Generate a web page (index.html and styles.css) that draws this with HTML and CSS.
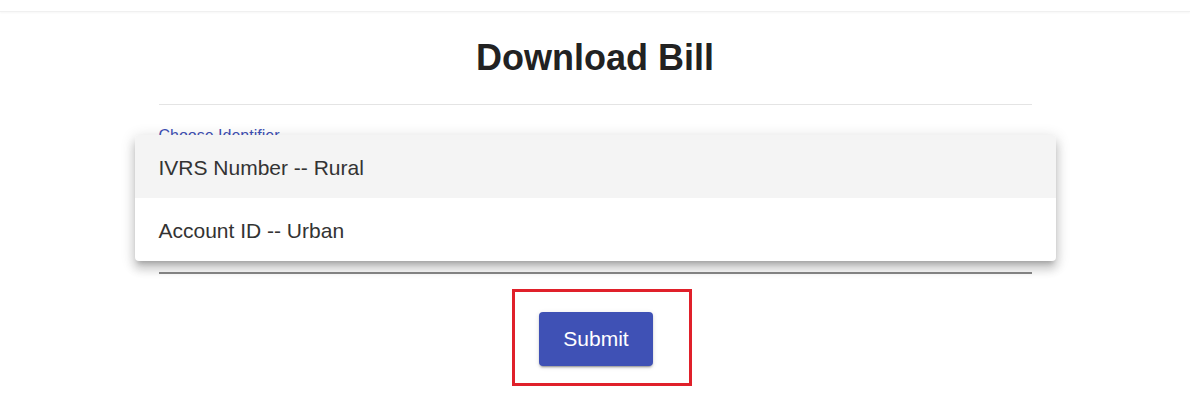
FILE: index.html
```html
<!DOCTYPE html>
<html lang="en">
<head>
  <meta charset="UTF-8">
  <meta name="viewport" content="width=device-width, initial-scale=1.0">
  <title>Download Bill</title>
  <link rel="stylesheet" href="styles.css">
</head>
<body>
  <!-- top app bar edge -->
  <div class="topbar"></div>

  <div class="page">
    <h1 class="title">Download Bill</h1>
    <hr class="divider">

    <!-- identifier select, menu open -->
    <div class="field">
      <label class="field-label">Choose Identifier</label>
      <div class="field-input"></div>
      <ul class="menu">
        <li class="menu-item selected">IVRS Number -- Rural</li>
        <li class="menu-item">Account ID -- Urban</li>
      </ul>
    </div>

    <div class="submit-row">
      <div class="highlight">
        <button class="submit-btn">Submit</button>
      </div>
    </div>
  </div>
</body>
</html>
```

FILE: styles.css
```css
body {
  margin: 0;
  padding: 0;
  background: #fff;
  color: #222;
  font-family: 'Liberation Sans', Arial, sans-serif;
}

.topbar {
  height: 11px;
  border-bottom: 1px solid #f0f0f0;
  box-shadow: 0 1px 2px rgba(0, 0, 0, 0.04);
}

.page {
  width: 873px;
  margin: 0 auto;
}

.title {
  margin: 25px 0 0;
  font-size: 36px;
  line-height: 42px;
  font-weight: bold;
  text-align: center;
  color: #222;
}

.divider {
  margin: 25px 0 0;
  border: none;
  border-top: 1px solid #e4e4e4;
}

.field {
  position: relative;
  margin-top: 22px;
}

.field-label {
  display: block;
  font-size: 16px;
  line-height: 18px;
  color: #3f51b5;
}

.field-input {
  height: 127px;
  border-bottom: 2px solid #8a8a8a;
}

/* open dropdown lies over the field */
.menu {
  position: absolute;
  top: 8px;
  left: -24px;
  right: -24px;
  margin: 0;
  padding: 0;
  list-style: none;
  background: #fff;
  border-radius: 4px;
  overflow: hidden;
  box-shadow: 0 5px 5px -3px rgba(0, 0, 0, 0.2), 0 8px 10px 1px rgba(0, 0, 0, 0.14), 0 3px 14px 2px rgba(0, 0, 0, 0.12);
}

.menu-item {
  height: 63px;
  display: flex;
  align-items: center;
  padding: 3px 0 0 24px;
  box-sizing: border-box;
  font-size: 21px;
  color: #333;
}

.menu-item.selected {
  background: #f4f4f4;
}

.submit-row {
  display: flex;
  justify-content: center;
  margin-top: 15px;
}

.highlight {
  margin-left: 14px;
  padding: 20px 36px 17px 24px;
  border: 3px solid #e0202a;
}

.submit-btn {
  display: block;
  width: 114px;
  height: 54px;
  font-family: 'Liberation Sans', Arial, sans-serif;
  font-size: 21px;
  color: #fff;
  background: #3f51b5;
  border: none;
  border-radius: 4px;
  cursor: pointer;
  box-shadow: 0 3px 1px -2px rgba(0, 0, 0, 0.2), 0 2px 2px 0 rgba(0, 0, 0, 0.14), 0 1px 5px 0 rgba(0, 0, 0, 0.12);
}
```
